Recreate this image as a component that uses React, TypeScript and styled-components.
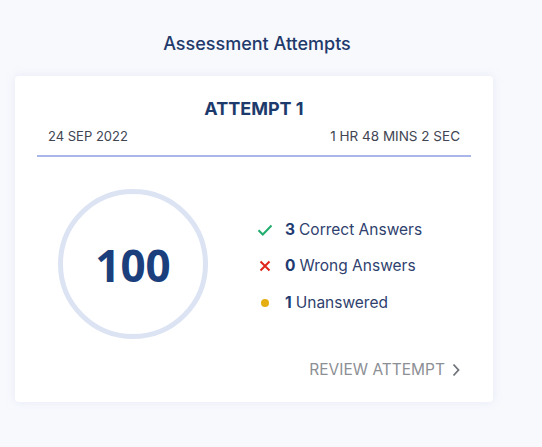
import React from 'react';
import styled, { createGlobalStyle } from 'styled-components';

const GlobalStyle = createGlobalStyle`
  body {
    margin: 0;
    background: #f8f9fd;
    font-family: Inter, "Liberation Sans", sans-serif;
  }
`;

const Page = styled.div`
  width: 542px;
  height: 447px;
  padding: 32px 0 0 15px;
  box-sizing: border-box;
`;

const Section = styled.div`
  width: 478px;
  display: flex;
  flex-direction: column;
`;

const Title = styled.h2`
  margin: 0 0 21px;
  padding-left: 6px;
  text-align: center;
  font-size: 18px;
  line-height: 23px;
  font-weight: 500;
  color: #22396b;
`;

const Card = styled.div`
  background: #fff;
  border-radius: 4px;
  box-shadow: 0 0 10px rgba(200, 208, 235, 0.35);
  padding: 21px 22px 22px;
  display: flex;
  flex-direction: column;
`;

const AttemptTitle = styled.div`
  text-align: center;
  font-size: 18px;
  line-height: 23px;
  font-weight: 700;
  color: #1d3a6c;
`;

const MetaRow = styled.div`
  display: flex;
  justify-content: space-between;
  margin-top: 8px;
  padding: 0 11px 10px;
  border-bottom: 2px solid #a9b6ea;
  font-size: 13px;
  line-height: 17px;
  color: #414552;

  span:last-child {
    font-size: 13.5px;
  }
`;

const Body = styled.div`
  display: flex;
  align-items: center;
  gap: 49px;
  padding: 32px 0 0 21px;
`;

const ScoreRing = styled.div`
  width: 150px;
  height: 150px;
  border-radius: 50%;
  border: 5px solid #dce4f4;
  box-sizing: border-box;
  display: flex;
  align-items: center;
  justify-content: center;
  font-family: "Open Sans", sans-serif;
  font-size: 44px;
  font-weight: 700;
  color: #1b3f7c;
  padding-top: 2px;
`;

const Stats = styled.ul`
  list-style: none;
  margin: 4px 0 0;
  padding: 0;
  display: flex;
  flex-direction: column;
  gap: 16.5px;
`;

const Stat = styled.li`
  display: flex;
  align-items: center;
  font-size: 15.5px;
  line-height: 20px;
  color: #2f3f6e;
`;

const StatIcon = styled.span`
  width: 16px;
  display: flex;
  justify-content: center;
  margin-right: 12px;
`;

const Dot = styled.span`
  width: 8px;
  height: 8px;
  border-radius: 50%;
  background: #e5ae12;
`;

const Count = styled.b`
  font-weight: 700;
  color: #213a70;
  margin-right: 4px;
`;

const Footer = styled.div`
  display: flex;
  justify-content: flex-end;
  margin-top: 21px;
  padding-right: 11px;
`;

const ReviewLink = styled.a`
  display: flex;
  align-items: center;
  gap: 7px;
  font-size: 15.5px;
  line-height: 20px;
  color: #8c8f95;
  text-decoration: none;
  cursor: pointer;
`;

const Check = () => (
  <svg width="16" height="12" viewBox="0 0 16 12" fill="none">
    <path d="M1.5 6.2l4.3 4.3L14.5 1.5" stroke="#20ad6e" strokeWidth="2" />
  </svg>
);

const Cross = () => (
  <svg width="12" height="12" viewBox="0 0 12 12" fill="none">
    <path d="M1.5 1.5l9 9M10.5 1.5l-9 9" stroke="#e0261b" strokeWidth="2" />
  </svg>
);

const Chevron = () => (
  <svg width="8" height="14" viewBox="0 0 8 14" fill="none">
    <path d="M1.5 1.5l5 5.5-5 5.5" stroke="#6f737a" strokeWidth="1.8" />
  </svg>
);

const stats = [
  { icon: <Check />, count: 3, label: 'Correct Answers' },
  { icon: <Cross />, count: 0, label: 'Wrong Answers' },
  { icon: <Dot />, count: 1, label: 'Unanswered' },
];

export default function App() {
  return (
    <>
      <GlobalStyle />
      <Page>
        <Section>
          <Title>Assessment Attempts</Title>
          <Card>
            <AttemptTitle>ATTEMPT 1</AttemptTitle>
            <MetaRow>
              <span>24 SEP 2022</span>
              <span>1 HR 48 MINS 2 SEC</span>
            </MetaRow>
            <Body>
              <ScoreRing>100</ScoreRing>
              <Stats>
                {stats.map(({ icon, count, label }) => (
                  <Stat key={label}>
                    <StatIcon>{icon}</StatIcon>
                    <Count>{count}</Count>
                    {label}
                  </Stat>
                ))}
              </Stats>
            </Body>
            <Footer>
              <ReviewLink>
                REVIEW ATTEMPT <Chevron />
              </ReviewLink>
            </Footer>
          </Card>
        </Section>
      </Page>
    </>
  );
}
